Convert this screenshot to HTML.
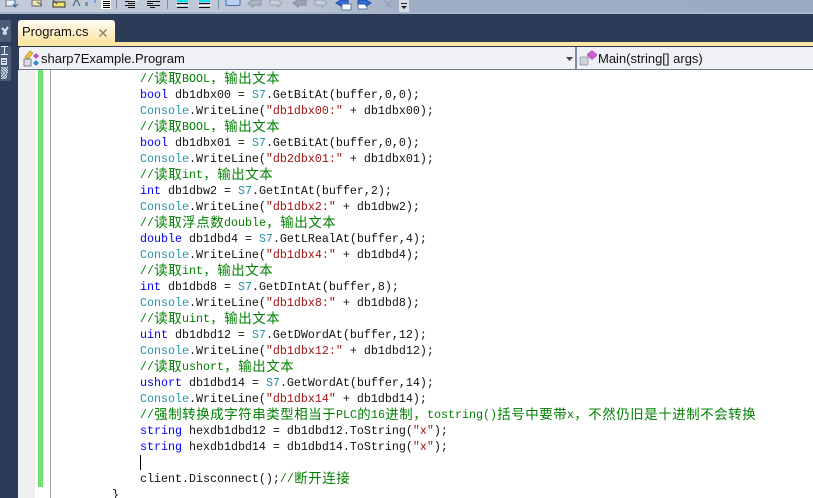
<!DOCTYPE html>
<html><head><meta charset="utf-8">
<style>
html,body{margin:0;padding:0;background:#fff}
#p{position:relative;width:813px;height:498px;overflow:hidden;background:#fff}
.a{position:absolute}
.l{position:absolute;left:140px;margin-top:1px;height:16px;line-height:16px;white-space:pre;font:11.67px/16px "Liberation Mono",monospace;color:#111}
.l i{font:normal 13.4px/16px "WenQuanYi Zen Hei","Noto Sans CJK SC",sans-serif;display:inline-block;width:14px;text-align:center;vertical-align:top;position:relative;top:-2px}
.g{color:#008000}.b{color:#0000ff}.t{color:#2b91af}.r{color:#a31515}
.u{font-family:"Liberation Sans",sans-serif;font-size:13px;color:#111;white-space:pre;position:absolute}
</style></head><body><div id="p">
<!-- toolbar -->
<div class="a" style="left:0;top:0;width:813px;height:12px;background:linear-gradient(90deg,#c3cbd8 0,#bcc6d5 300px,#9eacc4 420px,#9cabc3 813px)"></div>
<div class="a" style="left:0;top:12px;width:813px;height:2px;background:#aab6c9"></div>
<svg class="a" style="left:0;top:0" width="420" height="14">
<rect x="6" y="0" width="9" height="6" fill="#eef2f8" stroke="#66758f"/><path d="M15 1v5M13 4l2 3 3-3" stroke="#2a5ca8" fill="none"/>
<rect x="32" y="0" width="9" height="6" fill="#e8e0b0" stroke="#667"/><path d="M37 2l5 3" stroke="#555"/>
<rect x="53" y="2" width="12" height="5" fill="#f5e36a" stroke="#333"/><path d="M53 0l4 4" stroke="#444"/>
<path d="M73 6l3-6h1l3 6M85 3h3M85 5h3" stroke="#44536e" fill="none"/>
<path d="M95 0v3" stroke="#2e7de0"/><rect x="101" y="0" width="10" height="9" fill="#fff"/><path d="M103 1.5h7M103 3.5h7M103 5.5h7M103 7.5h7" stroke="#000"/>
<path d="M116.500 0v9" stroke="#7f8da3"/>
<path d="M125 1.500h10M128 3.500h7M125 5.500h10M128 7.500h7" stroke="#111"/><path d="M130 0h8" stroke="#fff"/>
<path d="M147 1.500h13M147 3.500h6M147 5.500h13M150 7.500h5" stroke="#111"/>
<path d="M167.500 0v9" stroke="#7f8da3"/>
<rect x="177" y="0" width="11" height="2" fill="#00e5ee"/><path d="M177 3.500h11M177 7.500h11" stroke="#111"/><path d="M176 5.500h13" stroke="#fff"/>
<rect x="199" y="0" width="11" height="2" fill="#00e5ee"/><path d="M199 3.500h11M199 7.500h11" stroke="#111"/><path d="M198 5.500h13" stroke="#fff"/>
<path d="M218.500 0v9" stroke="#7f8da3"/>
<rect x="226" y="-4" width="14" height="9.500" rx="1.500" fill="#b9cff2" stroke="#476da8"/>
<path d="M248 3l5-3h8v5h-8v2z" fill="#aeb6c4" stroke="#8c95a6"/>
<path d="M270 0h8l4 3-4 4v-2h-8z" fill="#c9d0db" stroke="#97a0b0"/>
<path d="M293 3l5-3h8v5h-8v2z" fill="#9ca5b5" stroke="#838c9d"/>
<path d="M315 0h7l5 3-5 4v-2h-7z" fill="#c9d0db" stroke="#97a0b0"/>
<path d="M336 3l5-3h7v4h-7v2z" fill="#2f6fdc" stroke="#1d49a5"/><rect x="342" y="4" width="9" height="6" fill="#fff" stroke="#5577aa"/>
<rect x="358" y="3" width="9" height="6" fill="#fff" stroke="#5577aa"/><path d="M358 0h8l5 3-5 3v-2h-8z" fill="#2f6fdc" stroke="#1d49a5"/>
<path d="M384 0l8 8M392 1l-6 6" stroke="#9aa3b1" stroke-width="2"/>
<rect x="399" y="0" width="10" height="12" fill="#d6dce6"/><path d="M401 3.500h6" stroke="#222"/><path d="M401 6h6l-3 3z" fill="#222"/>
</svg>
<!-- navy band -->
<div class="a" style="left:0;top:14px;width:813px;height:484px;background:#2b3b58"></div>
<!-- side tool panel -->
<div class="a" style="left:0;top:20px;width:11px;height:61px;background:#4a5c78;border-radius:0 2px 2px 0"></div>
<svg class="a" style="left:0;top:22px" width="11" height="60"><path d="M3 12l5-7M2 6l3 3" stroke="#dfe4ea" stroke-width="2"/><circle cx="5" cy="11" r="2" fill="#cfd5de"/><path d="M1 24.500h7M4.500 24.500v-1M4.500 24.500v8M1 32.500h7" stroke="#eef" /></svg>
<div class="a" style="left:1px;top:58px;width:6px;height:7px;border:1px solid #dde;box-sizing:border-box;background:repeating-linear-gradient(0deg,#dde 0 1px,transparent 1px 2px)"></div>
<div class="a" style="left:1px;top:67px;width:7px;height:6px;background:repeating-linear-gradient(45deg,#e3e7ee 0 1px,#5a6a84 1px 2px)"></div>
<div class="a" style="left:1px;top:73px;width:6px;height:6px;background:repeating-linear-gradient(135deg,#e3e7ee 0 1px,#5a6a84 1px 2px)"></div>
<!-- tab -->
<div class="a" style="left:18px;top:20px;width:97px;height:22px;background:linear-gradient(#fffdf5 0,#fff2cf 45%,#fde6a8 100%);border-radius:3px 3px 0 0"></div>
<div class="u" style="left:22px;top:24px;line-height:16px">Program.cs</div>
<svg class="a" style="left:98px;top:28px" width="12" height="11"><path d="M1.500 1.500l7 7M8.500 1.500l-7 7" stroke="#857c68" stroke-width="1.300"/></svg>
<div class="a" style="left:0;top:42px;width:813px;height:4px;background:#fde6a3"></div>
<div class="a" style="left:0;top:42px;width:18px;height:4px;background:#2b3b58"></div>
<!-- nav bar -->
<div class="a" style="left:19px;top:47px;width:794px;height:23px;background:#f0f1f7;border-radius:2px 0 0 0"></div>
<div class="a" style="left:19px;top:69px;width:794px;height:1px;background:#6e7b91"></div>
<div class="a" style="left:575px;top:47px;width:2px;height:23px;background:#7f8ba0"></div>
<svg class="a" style="left:23px;top:49px" width="18" height="18"><path d="M2 8l5-6 3 2-5 6z" fill="#e8c33a" stroke="#b08a1a" stroke-width=".6"/><rect x="1" y="10" width="7" height="7" fill="#d9dde4" stroke="#666" stroke-width=".8"/><path d="M10 7l3-3 3 3-3 3z" fill="#c050c0"/><path d="M10 14l3-3 3 3-3 3z" fill="#3a8ad8"/></svg>
<div class="u" style="left:41px;top:51px;line-height:16px">sharp7Example.Program</div>
<svg class="a" style="left:566px;top:57px" width="7" height="5"><path d="M0 0h7l-3.500 4z" fill="#444"/></svg>
<svg class="a" style="left:578px;top:49px" width="20" height="18"><rect x="2" y="8" width="8" height="8" rx="1" fill="#cfd3da" stroke="#8a8f99" stroke-width=".7"/><path d="M9 5l5-4 5 4v2l-5 4-5-4z" fill="#c761c9"/></svg>
<div class="u" style="left:598px;top:51px;line-height:16px">Main(string[] args)</div>
<!-- editor -->
<div class="a" style="left:18px;top:70px;width:795px;height:428px;background:#fff"></div>
<div class="a" style="left:18px;top:70px;width:17px;height:428px;background:#efefef"></div>
<div class="a" style="left:38px;top:70px;width:5px;height:417px;background:#6fe36f"></div>
<div class="a" style="left:50px;top:70px;width:1px;height:428px;background:#a5a5a5"></div>
<div class="l g" style="top:70px">//<i>读</i><i>取</i>BOOL<i>，</i><i>输</i><i>出</i><i>文</i><i>本</i></div>
<div class="l" style="top:86px"><span class="b">bool</span> db1dbx00 = <span class="t">S7</span>.GetBitAt(buffer,0,0);</div>
<div class="l" style="top:102px"><span class="t">Console</span>.WriteLine(<span class="r">"db1dbx00:"</span> + db1dbx00);</div>
<div class="l g" style="top:118px">//<i>读</i><i>取</i>BOOL<i>，</i><i>输</i><i>出</i><i>文</i><i>本</i></div>
<div class="l" style="top:134px"><span class="b">bool</span> db1dbx01 = <span class="t">S7</span>.GetBitAt(buffer,0,0);</div>
<div class="l" style="top:150px"><span class="t">Console</span>.WriteLine(<span class="r">"db2dbx01:"</span> + db1dbx01);</div>
<div class="l g" style="top:166px">//<i>读</i><i>取</i>int<i>，</i><i>输</i><i>出</i><i>文</i><i>本</i></div>
<div class="l" style="top:182px"><span class="b">int</span> db1dbw2 = <span class="t">S7</span>.GetIntAt(buffer,2);</div>
<div class="l" style="top:198px"><span class="t">Console</span>.WriteLine(<span class="r">"db1dbx2:"</span> + db1dbw2);</div>
<div class="l g" style="top:214px">//<i>读</i><i>取</i><i>浮</i><i>点</i><i>数</i>double<i>，</i><i>输</i><i>出</i><i>文</i><i>本</i></div>
<div class="l" style="top:230px"><span class="b">double</span> db1dbd4 = <span class="t">S7</span>.GetLRealAt(buffer,4);</div>
<div class="l" style="top:246px"><span class="t">Console</span>.WriteLine(<span class="r">"db1dbx4:"</span> + db1dbd4);</div>
<div class="l g" style="top:262px">//<i>读</i><i>取</i>int<i>，</i><i>输</i><i>出</i><i>文</i><i>本</i></div>
<div class="l" style="top:278px"><span class="b">int</span> db1dbd8 = <span class="t">S7</span>.GetDIntAt(buffer,8);</div>
<div class="l" style="top:294px"><span class="t">Console</span>.WriteLine(<span class="r">"db1dbx8:"</span> + db1dbd8);</div>
<div class="l g" style="top:310px">//<i>读</i><i>取</i>uint<i>，</i><i>输</i><i>出</i><i>文</i><i>本</i></div>
<div class="l" style="top:326px"><span class="b">uint</span> db1dbd12 = <span class="t">S7</span>.GetDWordAt(buffer,12);</div>
<div class="l" style="top:342px"><span class="t">Console</span>.WriteLine(<span class="r">"db1dbx12:"</span> + db1dbd12);</div>
<div class="l g" style="top:358px">//<i>读</i><i>取</i>ushort<i>，</i><i>输</i><i>出</i><i>文</i><i>本</i></div>
<div class="l" style="top:374px"><span class="b">ushort</span> db1dbd14 = <span class="t">S7</span>.GetWordAt(buffer,14);</div>
<div class="l" style="top:390px"><span class="t">Console</span>.WriteLine(<span class="r">"db1dbx14"</span> + db1dbd14);</div>
<div class="l g" style="top:406px">//<i>强</i><i>制</i><i>转</i><i>换</i><i>成</i><i>字</i><i>符</i><i>串</i><i>类</i><i>型</i><i>相</i><i>当</i><i>于</i>PLC<i>的</i>16<i>进</i><i>制</i><i>，</i>tostring()<i>括</i><i>号</i><i>中</i><i>要</i><i>带</i>x<i>，</i><i>不</i><i>然</i><i>仍</i><i>旧</i><i>是</i><i>十</i><i>进</i><i>制</i><i>不</i><i>会</i><i>转</i><i>换</i></div>
<div class="l" style="top:422px"><span class="b">string</span> hexdb1dbd12 = db1dbd12.ToString(<span class="r">"x"</span>);</div>
<div class="l" style="top:438px"><span class="b">string</span> hexdb1dbd14 = db1dbd14.ToString(<span class="r">"x"</span>);</div>
<div class="a" style="left:140px;top:455px;width:1px;height:15px;background:#000"></div>
<div class="l" style="top:470px">client.Disconnect();<span class="g">//<i>断</i><i>开</i><i>连</i><i>接</i></span></div>
<div class="l" style="top:486px;left:112px">}</div>
</div></body></html>
